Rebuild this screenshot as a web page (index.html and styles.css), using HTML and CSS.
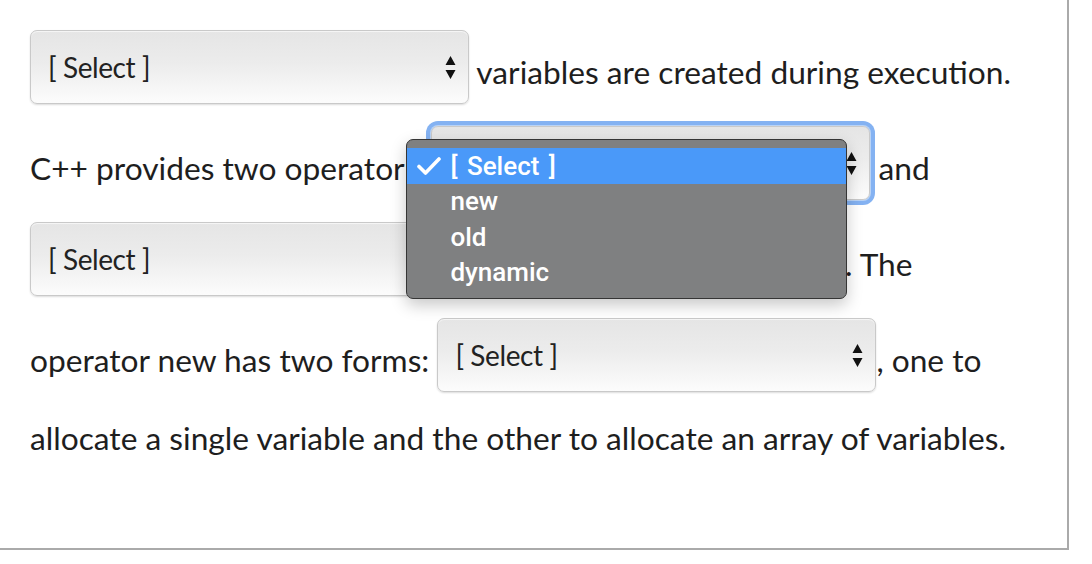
FILE: index.html
```html
<!DOCTYPE html>
<html lang="en">
<head>
    <meta charset="UTF-8">
    <title>Dynamic Variables Quiz</title>
    <link rel="stylesheet" href="styles.css">
</head>
<body>
    <div class="panel">
        <p class="question">
            <span class="select">
                <span class="select-text">[ Select ]</span>
                <svg class="arrows" width="11" height="25" viewBox="0 0 11 25"><path d="M5.5 1 L10.5 10 H0.5 Z M5.5 24 L10.5 15 H0.5 Z" fill="#111"/></svg>
            </span> variables are created during execution.
            C++ provides two operator<span class="s-hidden">s</span>
            <span class="select-wrap">
                <span class="select select-focus">
                    <span class="select-text">&nbsp;</span>
                    <svg class="arrows" width="11" height="25" viewBox="0 0 11 25"><path d="M5.5 1 L10.5 10 H0.5 Z M5.5 24 L10.5 15 H0.5 Z" fill="#111"/></svg>
                </span>
                <span class="dropdown">
                    <span class="option option-active">
                        <svg class="check" width="24" height="18" viewBox="0 0 24 18"><polyline points="2,9.5 8.5,16 22,2" fill="none" stroke="#fff" stroke-width="3.6" stroke-linecap="round" stroke-linejoin="round"/></svg>
                        [ Select ]
                    </span>
                    <span class="option">new</span>
                    <span class="option">old</span>
                    <span class="option">dynamic</span>
                </span>
            </span> and
            <span class="select select-long">
                <span class="select-text">[ Select ]</span>
                <svg class="arrows" width="11" height="25" viewBox="0 0 11 25"><path d="M5.5 1 L10.5 10 H0.5 Z M5.5 24 L10.5 15 H0.5 Z" fill="#111"/></svg>
            </span>. The
            operator new has two forms:
            <span class="select">
                <span class="select-text">[ Select ]</span>
                <svg class="arrows" width="11" height="25" viewBox="0 0 11 25"><path d="M5.5 1 L10.5 10 H0.5 Z M5.5 24 L10.5 15 H0.5 Z" fill="#111"/></svg>
            </span>, one to
            allocate a single variable and the other to allocate an array of variables.
        </p>
    </div>
</body>
</html>
```

FILE: styles.css
```css
* {
    margin: 0;
    padding: 0;
    box-sizing: border-box;
}

body {
    font-family: Lato, 'Open Sans', sans-serif;
    background: #fff;
    color: #1e1e1e;
}

.panel {
    width: 1069px;
    height: 550px;
    border-right: 2px solid #aaa;
    border-bottom: 2px solid #aaa;
    padding: 19px 38px 0 30px;
}

.question {
    font-size: 31.7px;
    line-height: 70px;
}

/* fake native select */
.select {
    display: inline-flex;
    align-items: center;
    justify-content: space-between;
    width: 439px;
    height: 74px;
    margin: 11px 0;
    padding: 0 12px 0 17px;
    vertical-align: 6px;
    border: 1px solid #c9c9c9;
    border-radius: 7px;
    background: linear-gradient(to bottom, #e5e5e5 0%, #ececec 45%, #fcfcfc 100%);
    box-shadow: inset 0 1px 1px rgba(255, 255, 255, 0.7), 0 1px 2px rgba(0, 0, 0, 0.14);
    font-size: 28px;
    line-height: 1;
    color: #222;
}

.select-long {
    width: 815px;
}

.select-text {
    letter-spacing: -0.4px;
}

.select-wrap {
    position: relative;
    display: inline-block;
    margin-left: 5px;
    vertical-align: 6px;
    line-height: 1;
}

.select-focus {
    vertical-align: baseline;
    box-shadow: 0 0 0 1px #b9d3f6, 0 0 0 5px #84b2f2;
}

.s-hidden {
    color: transparent;
}

.dropdown {
    position: absolute;
    left: -25px;
    top: 24px;
    width: 441px;
    height: 160px;
    padding: 8px 0;
    display: flex;
    flex-direction: column;
    background: #7f8081;
    border: 1px solid #353535;
    border-radius: 7px;
    box-shadow: 0 6px 16px rgba(0, 0, 0, 0.22);
    font-family: Roboto, 'Noto Sans', sans-serif;
    font-weight: 500;
    font-size: 26px;
    line-height: 1;
    color: #fff;
}

.option {
    height: 36px;
    display: flex;
    align-items: center;
    padding-left: 43px;
}

.option-active {
    background: #4a99f9;
    padding-left: 10px;
    word-spacing: 3px;
}

.check {
    margin-right: 9px;
}
```
